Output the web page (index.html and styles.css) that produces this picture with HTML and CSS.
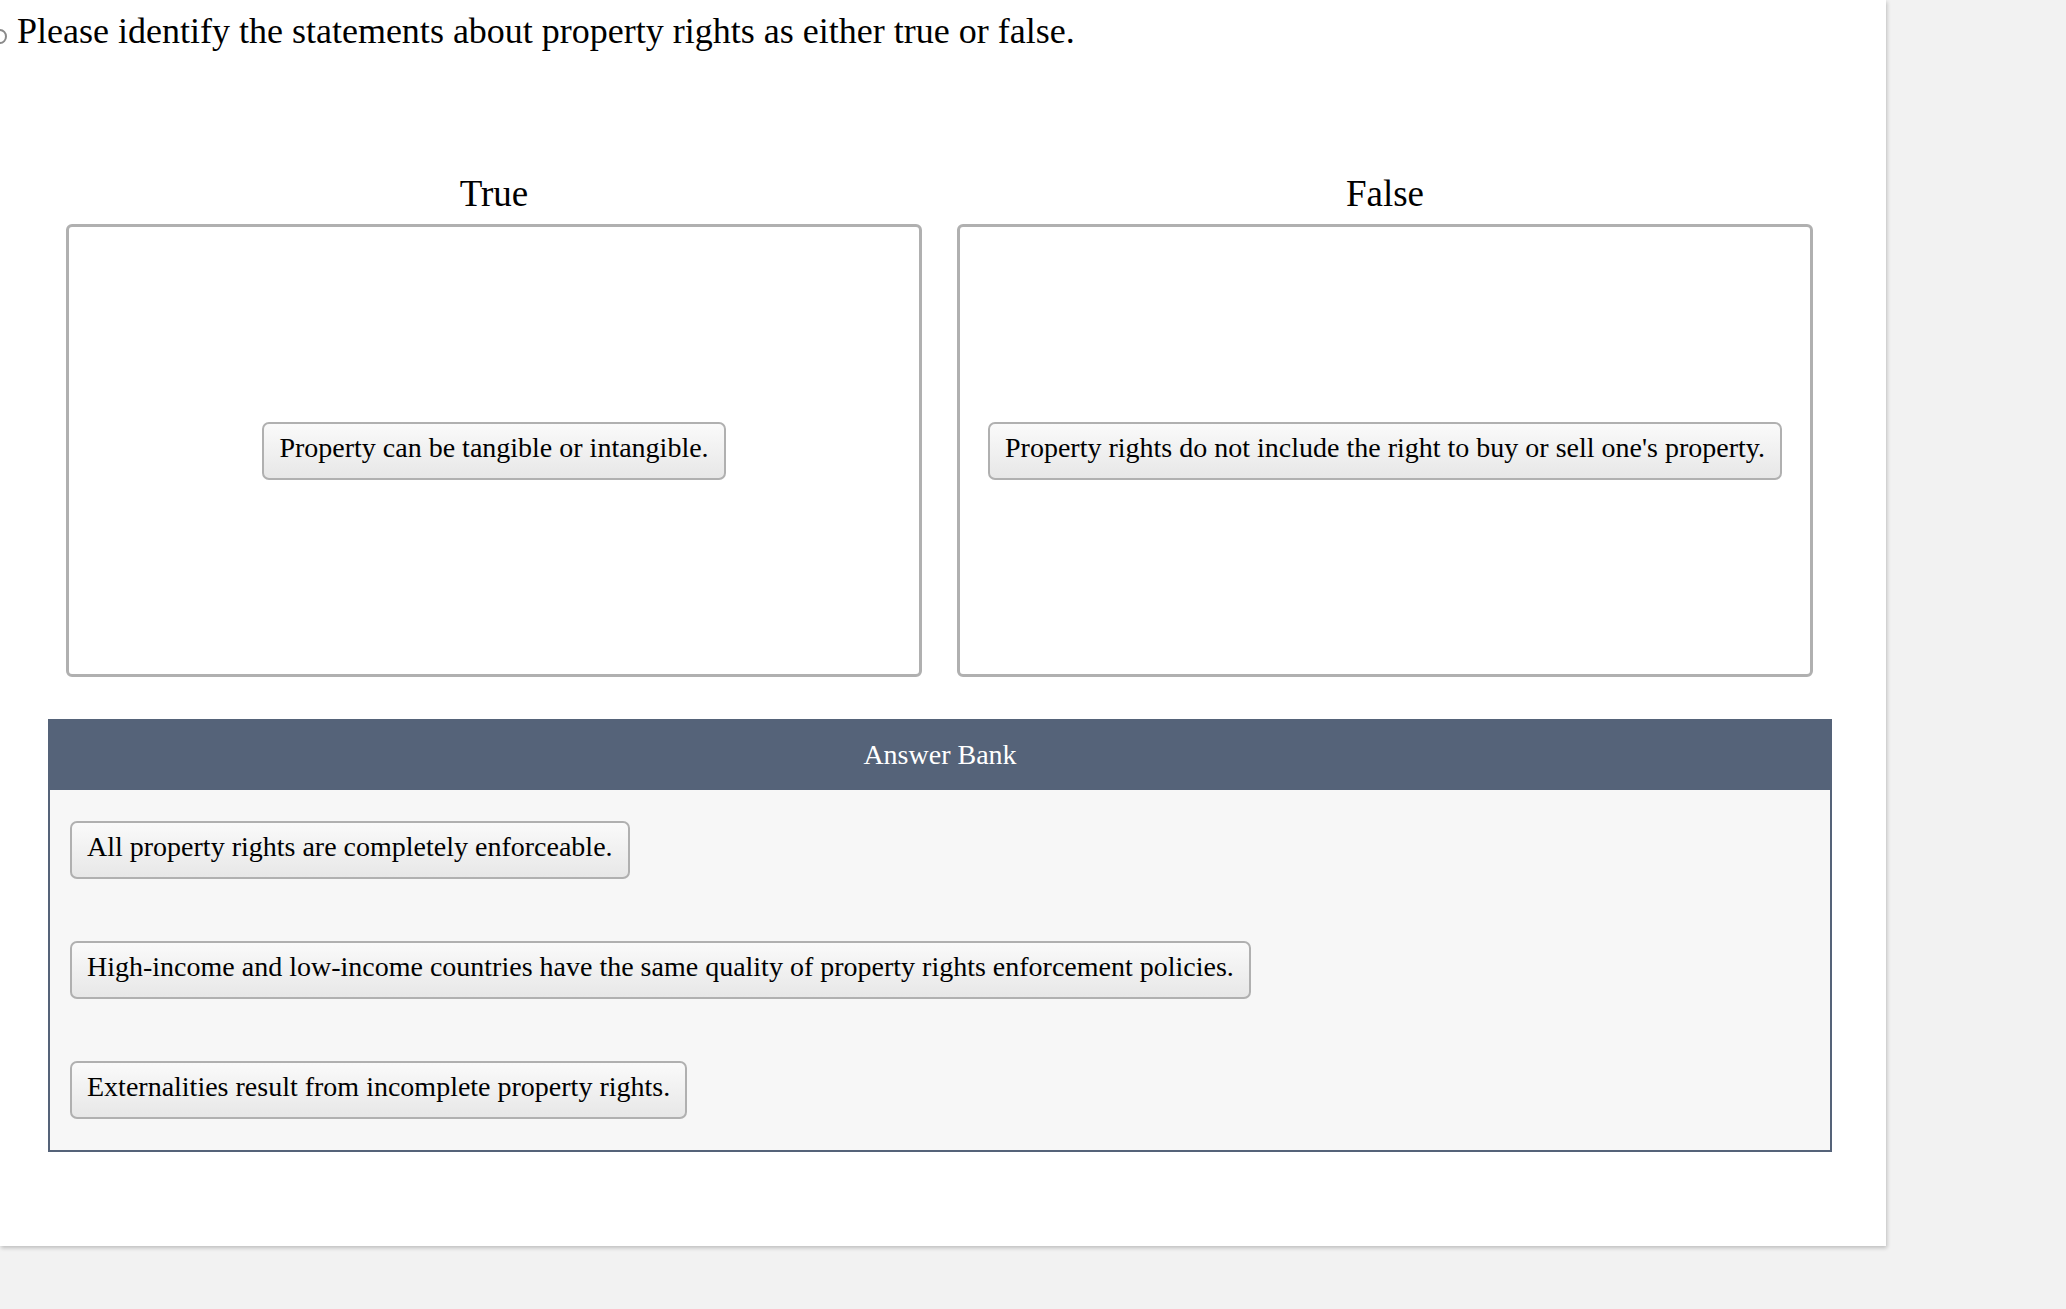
FILE: index.html
```html
<!DOCTYPE html>
<html lang="en">
<head>
<meta charset="utf-8">
<title>Property rights – True or False</title>
<link rel="stylesheet" href="styles.css">
</head>
<body>
<div class="page">
  <p class="question"><span class="qmark"></span>Please identify the statements about property rights as either true or false.</p>

  <div class="columns">
    <div class="column">
      <div class="col-label">True</div>
      <div class="dropzone">
        <div class="chip">Property can be tangible or intangible.</div>
      </div>
    </div>
    <div class="column">
      <div class="col-label">False</div>
      <div class="dropzone">
        <div class="chip">Property rights do not include the right to buy or sell one's property.</div>
      </div>
    </div>
  </div>

  <div class="bank">
    <div class="bank-header">Answer Bank</div>
    <div class="bank-body">
      <div class="chip">All property rights are completely enforceable.</div>
      <div class="chip">High-income and low-income countries have the same quality of property rights enforcement policies.</div>
      <div class="chip">Externalities result from incomplete property rights.</div>
    </div>
  </div>
</div>
</body>
</html>
```

FILE: styles.css
```css
html, body {
  margin: 0;
  padding: 0;
}

body {
  background: #f2f2f2;
  font-family: "Liberation Serif", "Times New Roman", serif;
  color: #000;
  width: 2066px;
  height: 1309px;
  overflow: hidden;
}

.page {
  width: 1886px;
  height: 1246px;
  background: #fff;
  box-shadow: 1px 2px 4px rgba(0, 0, 0, 0.22);
  box-sizing: border-box;
  overflow: hidden;
}

.question {
  margin: 0;
  padding: 11px 0 0 13px;
  font-size: 36px;
  line-height: 40px;
  white-space: nowrap;
}

.qmark {
  display: inline-block;
  width: 10px;
  height: 11px;
  margin-left: -20px;
  margin-right: 10px;
  border: 2px solid #8a8a8a;
  border-radius: 50%;
  vertical-align: -1px;
}

.columns {
  display: flex;
  gap: 35px;
  margin: 122px 0 0 66px;
}

.column {
  width: 856px;
  display: flex;
  flex-direction: column;
  align-items: center;
}

.col-label {
  font-size: 37px;
  line-height: 42px;
  margin-bottom: 9px;
}

.dropzone {
  width: 856px;
  height: 453px;
  box-sizing: border-box;
  border: 3px solid #b0b0b0;
  border-radius: 6px;
  display: flex;
  align-items: center;
  justify-content: center;
  background: #fff;
}

.chip {
  display: inline-block;
  box-sizing: border-box;
  height: 58px;
  padding: 0 15px 6px;
  border: 2px solid #b0b0b0;
  border-radius: 7px;
  background: linear-gradient(to bottom, #fafafa 0%, #e7e7e7 100%);
  font-size: 28px;
  line-height: 48px;
  white-space: nowrap;
}

.bank {
  margin: 42px 0 0 48px;
  width: 1784px;
  box-sizing: border-box;
  border: 2px solid #556379;
  border-top: none;
  background: #f7f7f7;
}

.bank-header {
  background: #556379;
  color: #fff;
  height: 71px;
  display: flex;
  align-items: center;
  justify-content: center;
  font-size: 28px;
}

.bank-body {
  display: flex;
  flex-direction: column;
  align-items: flex-start;
  gap: 62px;
  padding: 31px 20px 31px 20px;
}
```
